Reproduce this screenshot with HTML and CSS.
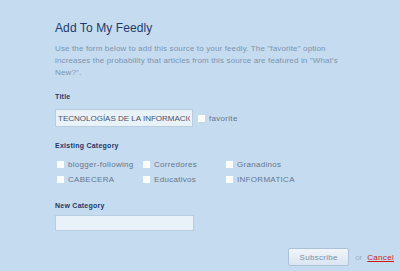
FILE: index.html
```html
<!DOCTYPE html>
<html>
<head>
<meta charset="utf-8">
<link rel="stylesheet" href="styles.css">
</head>
<body>
<div class="panel">
  <h1 class="title">Add To My Feedly</h1>
  <p class="desc">Use the form below to add this source to your feedly. The "favorite" option increases the probability that articles from this source are featured in "What's New?".</p>

  <div class="label label-title">Title</div>
  <div class="title-row">
    <input class="text-input title-input" type="text" value="TECNOLOGÍAS DE LA INFORMACIÓN Y LA COMUNICACIÓN">
    <label class="check"><input type="checkbox" class="box"><span>favorite</span></label>
  </div>

  <div class="label label-existing">Existing Category</div>
  <div class="cats">
    <label class="check"><input type="checkbox" class="box"><span>blogger-following</span></label>
    <label class="check"><input type="checkbox" class="box"><span>Corredores</span></label>
    <label class="check"><input type="checkbox" class="box"><span>Granadinos</span></label>
    <label class="check"><input type="checkbox" class="box"><span>CABECERA</span></label>
    <label class="check"><input type="checkbox" class="box"><span>Educativos</span></label>
    <label class="check"><input type="checkbox" class="box"><span>INFORMATICA</span></label>
  </div>

  <div class="label label-new">New Category</div>
  <input class="text-input new-input" type="text">

  <div class="actions">
    <button class="btn" type="button">Subscribe</button>
    <span class="or">or</span>
    <a class="cancel" href="#">Cancel</a>
  </div>
</div>
</body>
</html>
```

FILE: styles.css
```css
html, body {
  margin: 0;
  padding: 0;
}
body {
  background: #c5dcf0;
  font-family: "Liberation Sans", Arial, sans-serif;
  width: 400px;
  height: 271px;
  overflow: hidden;
}
.panel {
  padding: 20px 6px 0 55px;
}
.title {
  margin: 0;
  font-size: 12px;
  font-weight: normal;
  line-height: 16px;
  color: #22396a;
  letter-spacing: 0.1px;
}
.desc {
  margin: 7px 0 0 0;
  font-size: 8px;
  line-height: 12px;
  color: #7d93ae;
  letter-spacing: 0.14px;
  width: 292px;
}
.label {
  font-size: 7px;
  font-weight: bold;
  line-height: 10px;
  color: #1f3768;
  letter-spacing: 0.25px;
}
.label-title { margin-top: 13px; }
.label-existing { margin-top: 14px; }
.label-new { margin-top: 14px; }
.title-row {
  margin-top: 7px;
  display: flex;
  align-items: center;
  gap: 5px;
}
.text-input {
  box-sizing: border-box;
  margin: 0;
  border: 1px solid #b9cde0;
  background: #e9f1f9;
  font-family: "Liberation Sans", Arial, sans-serif;
  font-size: 8px;
  letter-spacing: 0;
  color: #44526a;
  padding: 0 2px;
  outline: none;
}
.title-input {
  width: 138px;
  height: 18px;
}
.new-input {
  display: block;
  margin-top: 4px;
  width: 139px;
  height: 16px;
}
.check {
  display: flex;
  align-items: center;
  gap: 4px;
  font-size: 8px;
  line-height: 15px;
  color: #65758a;
  letter-spacing: 0.3px;
}
.box {
  appearance: none;
  -webkit-appearance: none;
  margin: 0;
  width: 7px;
  height: 7px;
  background: #ffffff;
  border: none;
  flex: none;
}
.cats {
  margin: 6px 0 0 2px;
  display: grid;
  grid-template-columns: 86px 83px auto;
}
.actions {
  margin-top: 17px;
  display: flex;
  align-items: center;
  justify-content: flex-end;
  gap: 5px;
}
.btn {
  box-sizing: border-box;
  width: 61px;
  height: 18px;
  margin: 0;
  padding: 0;
  border: 1px solid #abc1d8;
  border-radius: 2px;
  background: linear-gradient(#f0f5fa, #dae5f1);
  font-family: "Liberation Sans", Arial, sans-serif;
  font-size: 8px;
  letter-spacing: 0.3px;
  color: #7f90a6;
}
.or {
  font-size: 8px;
  color: #9fb2c6;
  margin-left: 1px;
}
.cancel {
  font-size: 8px;
  color: #d01a1a;
  text-decoration: underline;
  letter-spacing: 0.3px;
}
```
